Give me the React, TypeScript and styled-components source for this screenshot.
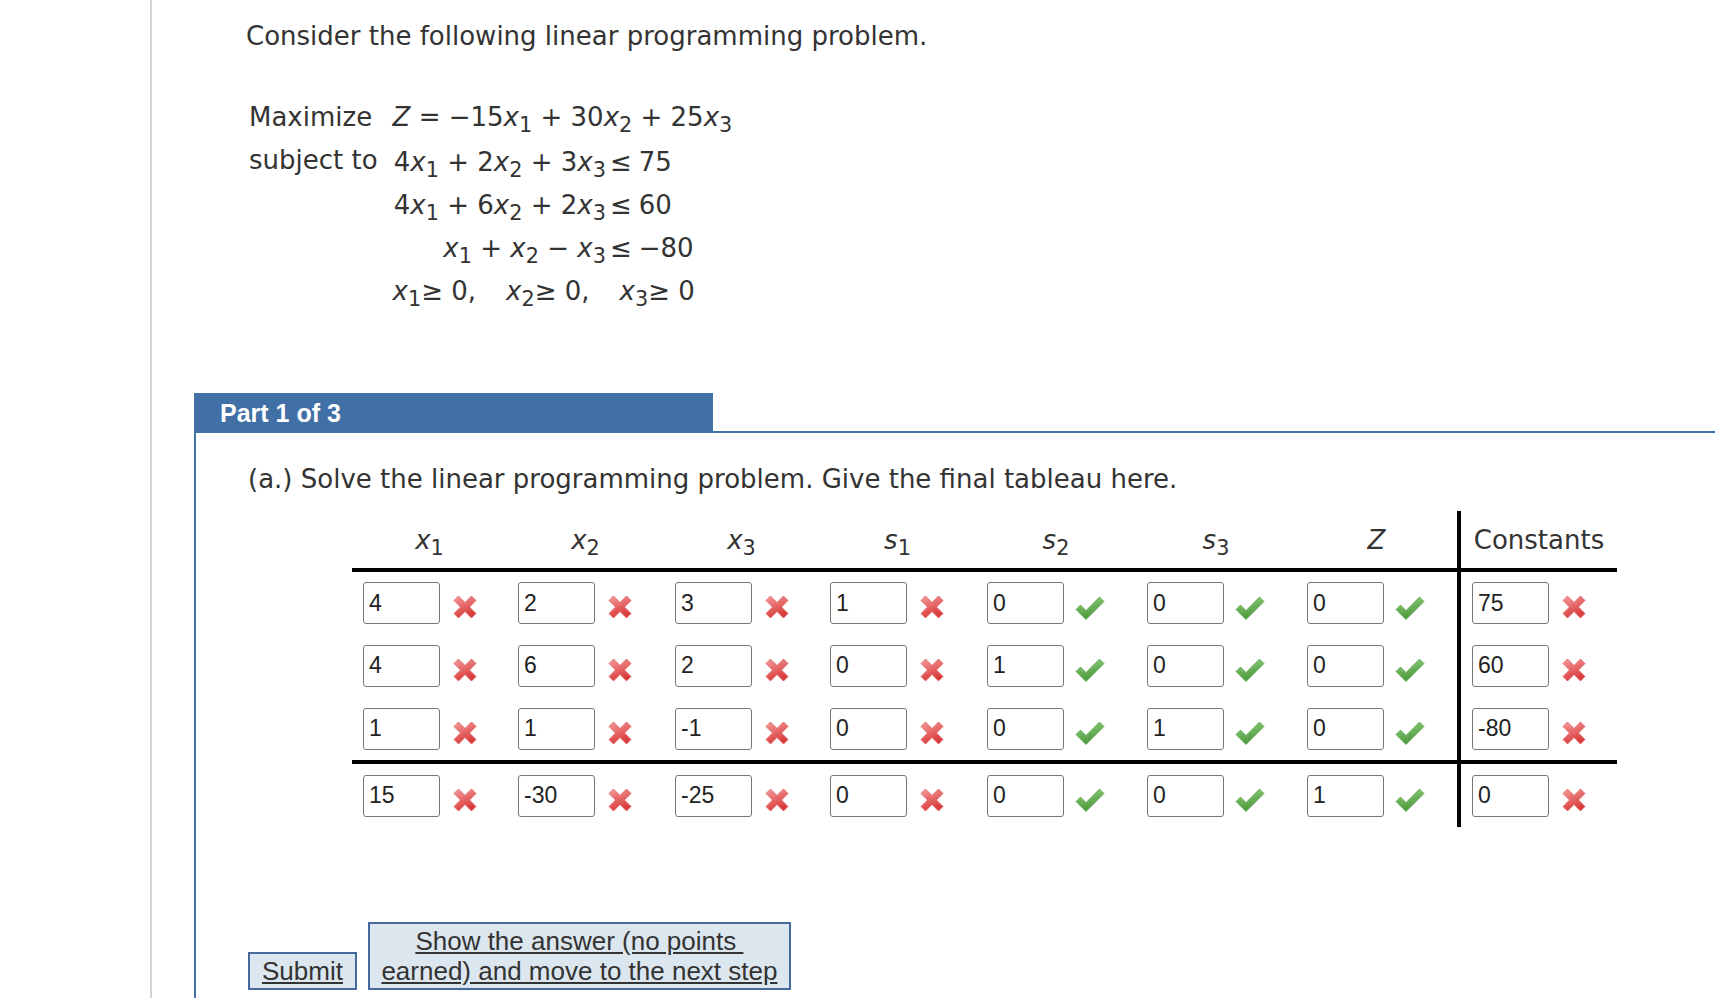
import React from 'react'
import styled, { createGlobalStyle } from 'styled-components'

const BLUE = '#4170a7'

const GlobalStyle = createGlobalStyle`
  html, body {
    margin: 0;
    padding: 0;
    background: #fff;
  }
  body {
    font-family: "DejaVu Sans", Verdana, sans-serif;
    color: #333;
  }
  * {
    box-sizing: border-box;
  }
`

type Cellval = { v: string; ok: boolean }

const rows: Cellval[][] = [
  ['4', '2', '3', '1', '0', '0', '0', '75'],
  ['4', '6', '2', '0', '1', '0', '0', '60'],
  ['1', '1', '-1', '0', '0', '1', '0', '-80'],
  ['15', '-30', '-25', '0', '0', '0', '1', '0'],
].map((r) => r.map((v, i) => ({ v, ok: i >= 4 && i <= 6 })))

const heads: [string, string][] = [
  ['x', '1'],
  ['x', '2'],
  ['x', '3'],
  ['s', '1'],
  ['s', '2'],
  ['s', '3'],
  ['Z', ''],
]

function V({ n, s }: { n: string; s?: string }) {
  return (
    <>
      <Var>{n}</Var>
      {s ? <Sub>{s}</Sub> : null}
    </>
  )
}

function Cross() {
  return (
    <Mark width="26" height="26" viewBox="0 0 26 26">
      <defs>
        <linearGradient id="xg" x1="0" y1="0" x2="0.4" y2="1">
          <stop offset="0" stopColor="#f59d9d" />
          <stop offset="1" stopColor="#d93a3a" />
        </linearGradient>
      </defs>
      <path
        d="M2 6.5 L6.5 2 L13 8.5 L19.5 2 L24 6.5 L17.5 13 L24 19.5 L19.5 24 L13 17.5 L6.5 24 L2 19.5 L8.5 13 Z"
        fill="url(#xg)"
        stroke="#e06060"
        strokeWidth="0.8"
        strokeLinejoin="round"
      />
    </Mark>
  )
}

function Tick() {
  return (
    <Mark width="30" height="27" viewBox="0 0 30 27" $wide>
      <defs>
        <linearGradient id="cg" x1="0" y1="0" x2="0.3" y2="1">
          <stop offset="0" stopColor="#92d080" />
          <stop offset="1" stopColor="#4a983a" />
        </linearGradient>
      </defs>
      <path
        d="M1 15.5 L5.5 11 L11 16.5 L24.5 3 L29 7.5 L11 25.5 Z"
        fill="url(#cg)"
        stroke="#5fa64f"
        strokeWidth="0.8"
        strokeLinejoin="round"
      />
    </Mark>
  )
}

export default function App() {
  return (
    <>
      <GlobalStyle />
      <Page>
        <Sidebar />
        <Main>
          <Intro>
            <Prompt>Consider the following linear programming problem.</Prompt>
            <Problem>
              <Label>Maximize</Label>
              <span>
                <V n="Z" /> = −15<V n="x" s="1" /> + 30<V n="x" s="2" /> + 25<V n="x" s="3" />
              </span>
              <Label>subject to</Label>
              <Constraints>
                <Lhs>
                  4<V n="x" s="1" /> + 2<V n="x" s="2" /> + 3<V n="x" s="3" />
                </Lhs>
                <Rel>≤</Rel>
                <span>75</span>
                <Lhs>
                  4<V n="x" s="1" /> + 6<V n="x" s="2" /> + 2<V n="x" s="3" />
                </Lhs>
                <Rel>≤</Rel>
                <span>60</span>
                <Lhs>
                  <V n="x" s="1" /> + <V n="x" s="2" /> − <V n="x" s="3" />
                </Lhs>
                <Rel>≤</Rel>
                <span>−80</span>
                <Nonneg>
                  <V n="x" s="1" />≥ 0,{'   \u2009'}
                  <V n="x" s="2" />≥ 0,{'   \u2009'}
                  <V n="x" s="3" />≥ 0
                </Nonneg>
              </Constraints>
            </Problem>
          </Intro>

          <PartHead>
            <Tab>Part 1 of 3</Tab>
            <TabRule />
          </PartHead>

          <Panel>
            <Question>(a.) Solve the linear programming problem. Give the final tableau here.</Question>

            <Tableau>
              <Row $h={57} $rule>
                {heads.map(([n, s], i) => (
                  <HeadCell key={i}>
                    <span>
                      <V n={n} s={s} />
                    </span>
                  </HeadCell>
                ))}
                <HeadCell $divider>Constants</HeadCell>
              </Row>
              {rows.map((r, ri) => (
                <Row key={ri} $h={ri === 0 ? 62 : 63} $rule={ri === 2}>
                  {r.map((c, ci) => (
                    <Cell key={ci} $divider={ci === 7}>
                      <Entry readOnly value={c.v} />
                      {c.ok ? <Tick /> : <Cross />}
                    </Cell>
                  ))}
                </Row>
              ))}
            </Tableau>

            <Actions>
              <Button $pad={12}>Submit</Button>
              <Button $w={423} $pad={9}>
                {'Show the answer (no points\u00a0'}
                <br />
                earned) and move to the next step
              </Button>
            </Actions>
          </Panel>
        </Main>
      </Page>
    </>
  )
}

const Page = styled.div`
  display: flex;
  min-height: 100vh;
`

const Sidebar = styled.div`
  flex: none;
  width: 152px;
  border-right: 2px solid #d4d4d4;
`

const Main = styled.div`
  flex: 1;
  padding: 21px 0 0 42px;
`

const Intro = styled.div`
  padding-left: 52px;
`

const Prompt = styled.p`
  margin: 0;
  font-size: 26px;
  line-height: 30px;
`

const Problem = styled.div`
  display: grid;
  grid-template-columns: auto auto;
  justify-content: start;
  column-gap: 15px;
  margin-top: 45px;
  padding-left: 3px;
  font-size: 26px;
  line-height: 43px;
  white-space: nowrap;
`

const Label = styled.span``

const Constraints = styled.div`
  display: grid;
  grid-template-columns: auto auto auto;
  justify-content: start;
  padding-top: 2px;
`

const Lhs = styled.span`
  text-align: right;
`

const Rel = styled.span`
  padding: 0 6px 0 4px;
`

const Nonneg = styled.div`
  grid-column: 1 / -1;
  white-space: pre;
`

const Var = styled.i`
  font-style: italic;
`

const Sub = styled.sub`
  font-size: 0.8em;
  font-style: normal;
  line-height: 0;
  vertical-align: -0.3em;
`

const PartHead = styled.div`
  display: flex;
  align-items: flex-end;
  margin-top: 80px;
`

const Tab = styled.div`
  flex: none;
  width: 519px;
  height: 40px;
  padding-left: 26px;
  background: ${BLUE};
  color: #fff;
  font: bold 25px/40px "Liberation Sans", Arial, sans-serif;
`

const TabRule = styled.div`
  flex: 1;
  border-bottom: 2px solid ${BLUE};
`

const Panel = styled.div`
  border-left: 2px solid ${BLUE};
  padding: 31px 0 60px 52px;
`

const Question = styled.p`
  margin: 0;
  font-size: 26px;
  line-height: 30px;
`

const Tableau = styled.div`
  margin: 17px 0 0 104px;
`

const Row = styled.div<{ $h: number; $rule?: boolean }>`
  display: grid;
  grid-template-columns: 155px 157px 155px 157px 160px 160px 161px 160px;
  width: max-content;
  box-sizing: content-box;
  height: ${(p) => p.$h}px;
  border-bottom: ${(p) => (p.$rule ? '4px solid #000' : 'none')};
`

const Cell = styled.div<{ $divider?: boolean }>`
  display: flex;
  align-items: center;
  padding-left: 11px;
  border-left: ${(p) => (p.$divider ? '4px solid #000' : 'none')};
`

const HeadCell = styled(Cell)`
  justify-content: center;
  padding-left: 0;
  font-size: 26px;
  color: #333;
  white-space: nowrap;
`

const Entry = styled.input`
  flex: none;
  width: 77px;
  height: 42px;
  padding: 0 0 0 5px;
  border: 1.5px solid #777;
  border-radius: 3px;
  background: #fff;
  color: #222;
  font: 23px "Liberation Sans", Arial, sans-serif;
  outline: none;
`

const Mark = styled.svg<{ $wide?: boolean }>`
  flex: none;
  margin-left: ${(p) => (p.$wide ? 11 : 12)}px;
  margin-top: 8px;
`

const Actions = styled.div`
  display: flex;
  align-items: flex-end;
  gap: 11px;
  margin-top: 95px;
`

const Button = styled.button<{ $w?: number; $pad: number }>`
  width: ${(p) => (p.$w ? `${p.$w}px` : 'auto')};
  padding: 2px ${(p) => p.$pad}px;
  border: 2px solid #466a9c;
  border-radius: 0;
  background: #dce6ef;
  color: #333;
  font: 26px/30px "Liberation Sans", Arial, sans-serif;
  text-align: center;
  text-decoration: underline;
  white-space: nowrap;
  cursor: pointer;
`
